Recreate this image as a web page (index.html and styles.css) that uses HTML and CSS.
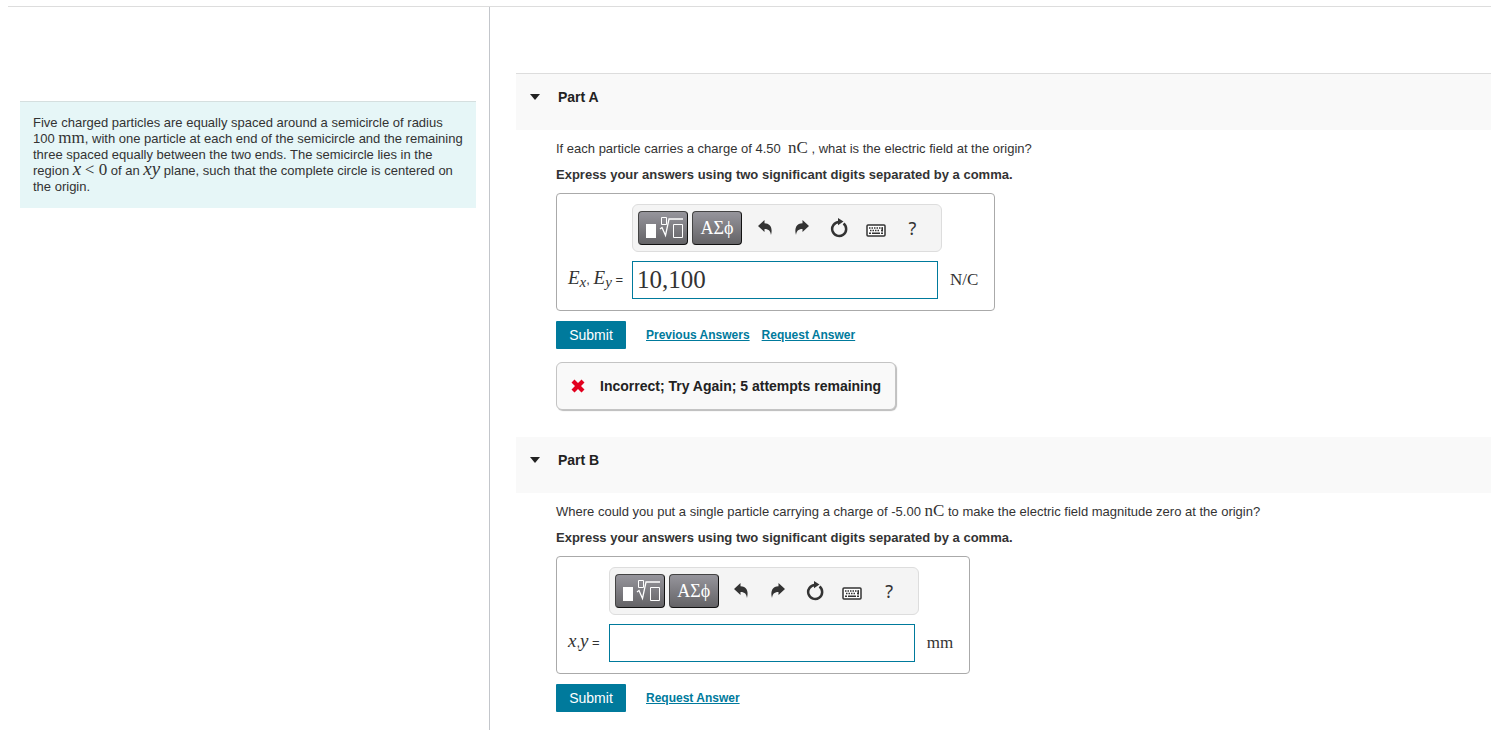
FILE: index.html
```
<!DOCTYPE html>
<html lang="en">

<head>
    <meta charset="UTF-8">
    <title>Electric Field of a Semicircle</title>
    <link rel="stylesheet" href="styles.css">
</head>

<body>
    <!-- shared icons -->
    <svg class="sprite" aria-hidden="true">
        <symbol id="icon-template" viewBox="0 0 40 24">
            <rect x="3" y="8" width="10" height="14" fill="#fff" />
            <path d="M18.500 1.500h5v7h-5zM30.500 8.500h9v13h-9z" fill="none" stroke="#fff" />
            <path d="M17 13l2-1.500 3.500 8 3.500-16.500H40" fill="none" stroke="#fff" stroke-width="1.300" />
        </symbol>
        <symbol id="icon-undo" viewBox="0 0 16 16">
            <path d="M1 6L7.500 0v3.300c5.500 0.200 8.500 4.200 6.500 11.700C13.500 11 12 8.900 7.500 8.900V12z" />
        </symbol>
        <symbol id="icon-redo" viewBox="0 0 16 16">
            <path d="M15 6L8.500 0v3.300c-5.500 0.200-8.500 4.200-6.500 11.700C2.500 11 4 8.900 8.500 8.900V12z" />
        </symbol>
        <symbol id="icon-reset" viewBox="0 0 18 20">
            <path d="M13.500 5.500A7 7 0 1 1 9 4" fill="none" stroke="currentColor" stroke-width="2.500" />
            <path d="M8 0l5.500 3.600L8 7.300z" />
        </symbol>
        <symbol id="icon-keyboard" viewBox="0 0 20 14">
            <rect x="1" y="1" width="18" height="11" rx="1" fill="#fff" stroke="currentColor" stroke-width="1.500" />
            <path d="M3 4h14M4 6.500h9M15 6.500h2" stroke="currentColor" stroke-width="1.500" stroke-dasharray="1.500 1" />
            <path d="M3 9.300h2M6 9.300h8M15 9.300h2M16.300 3.500v4" stroke="currentColor" stroke-width="1.400" />
        </symbol>
        <symbol id="icon-wrong" viewBox="0 0 14 14">
            <path d="M3.500 0.500L7 4l3.500-3.500 3 3L10 7l3.500 3.500-3 3L7 10l-3.500 3.500-3-3L4 7 0.500 3.500z" />
        </symbol>
    </svg>

    <div class="page">
        <aside class="sidebar">
            <div class="problem">
                Five charged particles are equally spaced around a semicircle of radius
                100 <span class="math">mm</span>, with one particle at each end of the semicircle and the remaining
                three spaced equally between the two ends. The semicircle lies in the
                region <i class="math">x</i> <span class="math">&lt; 0</span> of an <i class="math">xy</i> plane, such that the complete circle is centered on
                the origin.
            </div>
        </aside>

        <main class="content">
            <section class="part">
                <h2 class="part-header">
                    <button type="button" class="part-toggle"><span class="caret"></span>Part A</button>
                </h2>
                <div class="part-body">
                    <p class="question">If each particle carries a charge of 4.50 &nbsp;<span class="math">nC</span> , what is the electric field at the origin?</p>
                    <p class="instructions">Express your answers using two significant digits separated by a comma.</p>
                    <form class="answer-form">
                        <div class="answer-box">
                            <div class="toolbar">
                                <button type="button" class="tool-dark" aria-label="Templates"><svg width="40" height="24"><use href="#icon-template" /></svg></button>
                                <button type="button" class="tool-dark">ΑΣϕ</button>
                                <button type="button" class="tool" aria-label="Undo"><svg width="16" height="16"><use href="#icon-undo" /></svg></button>
                                <button type="button" class="tool" aria-label="Redo"><svg width="16" height="16"><use href="#icon-redo" /></svg></button>
                                <button type="button" class="tool" aria-label="Reset"><svg width="18" height="20"><use href="#icon-reset" /></svg></button>
                                <button type="button" class="tool" aria-label="Keyboard shortcuts"><svg class="keyboard" width="20" height="14"><use href="#icon-keyboard" /></svg></button>
                                <button type="button" class="tool help">?</button>
                            </div>
                            <label class="answer-label" for="answer-a"><i class="math">E<sub>x</sub></i>, <i class="math">E<sub>y</sub></i> =</label>
                            <input type="text" class="answer-input" id="answer-a" value="10,100">
                            <span class="math unit">N/C</span>
                        </div>
                        <div class="actions">
                            <button type="button" class="submit">Submit</button>
                            <a href="#">Previous Answers</a>
                            <a href="#">Request Answer</a>
                        </div>
                        <div class="feedback">
                            <svg width="14" height="14" aria-hidden="true"><use href="#icon-wrong" /></svg>
                            <span>Incorrect; Try Again; 5 attempts remaining</span>
                        </div>
                    </form>
                </div>
            </section>

            <section class="part">
                <h2 class="part-header">
                    <button type="button" class="part-toggle"><span class="caret"></span>Part B</button>
                </h2>
                <div class="part-body">
                    <p class="question">Where could you put a single particle carrying a charge of -5.00 <span class="math">nC</span> to make the electric field magnitude zero at the origin?</p>
                    <p class="instructions">Express your answers using two significant digits separated by a comma.</p>
                    <form class="answer-form">
                        <div class="answer-box">
                            <div class="toolbar">
                                <button type="button" class="tool-dark" aria-label="Templates"><svg width="40" height="24"><use href="#icon-template" /></svg></button>
                                <button type="button" class="tool-dark">ΑΣϕ</button>
                                <button type="button" class="tool" aria-label="Undo"><svg width="16" height="16"><use href="#icon-undo" /></svg></button>
                                <button type="button" class="tool" aria-label="Redo"><svg width="16" height="16"><use href="#icon-redo" /></svg></button>
                                <button type="button" class="tool" aria-label="Reset"><svg width="18" height="20"><use href="#icon-reset" /></svg></button>
                                <button type="button" class="tool" aria-label="Keyboard shortcuts"><svg class="keyboard" width="20" height="14"><use href="#icon-keyboard" /></svg></button>
                                <button type="button" class="tool help">?</button>
                            </div>
                            <label class="answer-label" for="answer-b"><i class="math">x</i>,<i class="math">y</i> =</label>
                            <input type="text" class="answer-input" id="answer-b">
                            <span class="math unit">mm</span>
                        </div>
                        <div class="actions">
                            <button type="button" class="submit">Submit</button>
                            <a href="#">Request Answer</a>
                        </div>
                    </form>
                </div>
            </section>
        </main>
    </div>
</body>

</html>
```

FILE: styles.css
```
* {
    box-sizing: border-box;
}

body {
    margin: 6px 0 0 8px;
    font-family: "Liberation Sans", Arial, sans-serif;
    font-size: 13px;
    line-height: 16px;
    color: #333;
    background-color: #fff;
}

button,
input {
    font-family: inherit;
    color: inherit;
}

.sprite {
    display: none;
}

.page {
    display: flex;
    min-height: calc(100vh - 6px);
    border-top: 1px solid #ddd;
}

.sidebar {
    flex: 0 0 482px;
    padding: 94px 13px 0 12px;
    border-right: 1px solid #c3c6cb;
}

.problem {
    padding: 13px;
    border-top: 1px solid #d5dfdf;
    background-color: #e6f6f7;
}

/* zero line height keeps the larger math text from stretching its line */
.math {
    font-family: "Liberation Serif", "Times New Roman", serif;
    font-size: 17px;
    line-height: 0;
}

i.math {
    font-size: 19px;
}

.content {
    flex: 1;
    padding: 66px 0 0 26px;
}

.part-header {
    display: flex;
    height: 56px;
    margin: 0;
    padding: 15px 14px;
    background-color: #f9f9f9;
}

.part:first-child .part-header {
    height: 57px;
    border-top: 1px solid #ddd;
}

.part-toggle {
    display: flex;
    align-items: center;
    gap: 18px;
    height: 16px;
    padding: 0;
    border: 0;
    background: none;
    font-size: 14px;
    font-weight: bold;
    color: #222;
    cursor: pointer;
}

.caret {
    border: 5px solid transparent;
    border-top: 6px solid #222;
    border-bottom: 0;
}

.part-body {
    padding: 11px 0 27px 40px;
}

.part-body p {
    margin: 0 0 10px;
}

.instructions {
    font-weight: bold;
}

.answer-box {
    display: grid;
    grid-template-columns: auto 306px auto;
    align-items: center;
    row-gap: 9px;
    width: max-content;
    padding: 10px 16px 11px 11px;
    border: 1px solid #aaa;
    border-radius: 4px;
}

.toolbar {
    grid-column: 2;
    display: flex;
    align-items: center;
    width: 310px;
    height: 48px;
    padding: 0 5px;
    border: 1px solid #ddd;
    border-radius: 6px;
    background-color: #f4f4f4;
}

.tool-dark {
    display: flex;
    align-items: center;
    justify-content: center;
    width: 50px;
    height: 34px;
    margin-right: 4px;
    padding: 0;
    border: 1px solid #111;
    border-top-color: #444;
    border-left-color: #444;
    border-radius: 4px;
    background-image: linear-gradient(#96959c, #646366);
    font-family: "Liberation Serif", "Times New Roman", serif;
    font-size: 18px;
    color: #fff;
}

.tool {
    display: flex;
    align-items: center;
    justify-content: center;
    width: 37px;
    height: 34px;
    padding: 0;
    border: 0;
    background: none;
    color: #333;
    fill: currentColor;
}

.keyboard {
    margin-top: 5px;
}

.help {
    font-family: "Noto Sans", sans-serif;
    font-size: 18px;
}

.answer-label {
    grid-column: 1;
    padding-right: 9px;
    white-space: nowrap;
}

.answer-label sub {
    font-size: 15px;
    line-height: 0;
    vertical-align: -3px;
}

.answer-input {
    width: 306px;
    height: 38px;
    padding: 0 4px;
    border: 1px solid #007a9c;
    font-family: "Liberation Serif", "Times New Roman", serif;
    font-size: 25px;
}

.unit {
    padding-left: 12px;
}

.actions {
    display: flex;
    align-items: center;
    gap: 12px;
    margin-top: 10px;
}

.actions a {
    font-size: 12px;
    font-weight: bold;
    color: #007a9c;
}

.submit {
    width: 70px;
    height: 28px;
    margin-right: 8px;
    padding: 0;
    border: 0;
    border-radius: 1px;
    background-color: #007a9c;
    font-size: 14px;
    color: #fff;
    cursor: pointer;
}

.feedback {
    display: flex;
    align-items: center;
    gap: 15px;
    width: max-content;
    margin-top: 13px;
    padding: 15px 14px;
    border: 1px solid #c4c4c4;
    border-radius: 6px;
    box-shadow: 1px 1px 1px #bbb;
    background-color: #f9f9f9;
    font-size: 14px;
    font-weight: bold;
    color: #222;
}

.feedback svg {
    fill: #e2001f;
}
```
